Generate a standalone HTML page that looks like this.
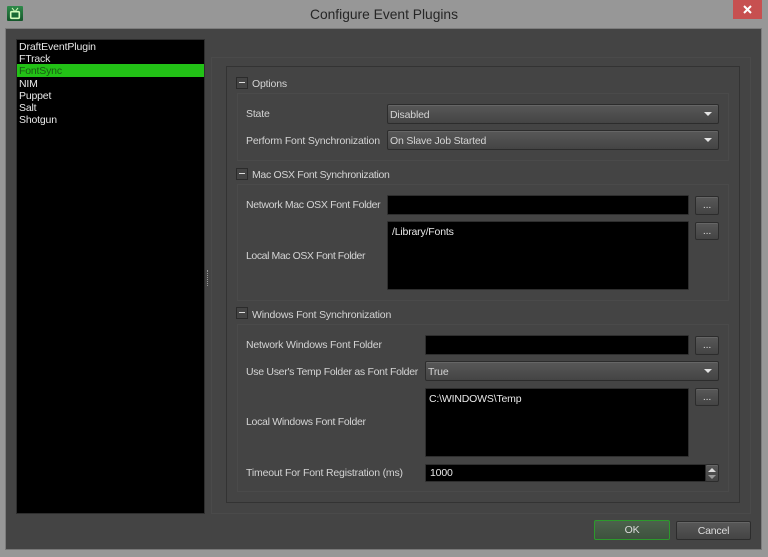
<!DOCTYPE html>
<html><head><meta charset="utf-8"><style>
html,body{margin:0;padding:0}
body{width:768px;height:557px;overflow:hidden;background:#979797;position:relative;font-family:"Liberation Sans",sans-serif;font-size:10.5px;letter-spacing:-.18px;color:#d4d4d4}
div{position:absolute;box-sizing:border-box}
.t{white-space:nowrap;line-height:13px;margin-top:1px}
.box{border:1px solid #4a4a4a}
.in{background:#000;border:1px solid #2e2e2e;border-radius:1px;color:#e8e8e8}
.cb{background:linear-gradient(#585858,#444);border:1px solid #2c2c2c;border-radius:2px;color:#d4d4d4;line-height:20px;padding-left:2px;box-shadow:inset 0 1px 0 #666}
.cb:after{content:"";position:absolute;right:6px;top:7px;border-left:4px solid transparent;border-right:4px solid transparent;border-top:4px solid #e4e4e4}
.btn{background:linear-gradient(#585858,#444);border:1px solid #2c2c2c;border-radius:2px;box-shadow:inset 0 1px 0 #666;text-align:center;color:#dcdcdc}
.m{width:12px;height:12px;border:1px solid #2b2b2b;background:#444}
.m:after{content:"";position:absolute;left:2px;top:4px;width:6px;height:1px;background:#ddd}
</style></head><body>
<div style="left:7px;top:6px;width:16px;height:15px;background:linear-gradient(#2f8a4a,#14562a);border-radius:1px"></div>
<svg style="position:absolute;left:7px;top:6px" width="16" height="15"><path d="M5 2l2.500 3M11 2L8.500 5" stroke="#c8f8b0" fill="none"/><rect x="3.700" y="5.700" width="8.600" height="6.600" rx="1" fill="#1a6a34" stroke="#d4fbbc" stroke-width="1.600"/></svg>
<div class="t" style="left:0;top:6px;width:768px;text-align:center;font-size:13.8px;letter-spacing:0;line-height:16px;color:#262626">Configure Event Plugins</div>
<div style="left:733px;top:0;width:29px;height:19px;background:#c75050"></div>
<svg style="position:absolute;left:733px;top:0" width="29" height="19"><path d="M11 6l7 7M18 6l-7 7" stroke="#fff" stroke-width="2"/></svg>

<div style="left:5px;top:28px;width:757px;height:522px;background:#444;border:1px solid #7c7c7c;border-bottom-color:#777"></div>

<div style="left:16px;top:39px;width:189px;height:475px;background:#000;border:1px solid #2e2e2e"></div>
<div style="left:17px;top:64px;width:187px;height:13px;background:#22c116"></div>
<div class="t" style="left:19px;top:40px;color:#e8e8e8;letter-spacing:-.12px">DraftEventPlugin</div>
<div class="t" style="left:19px;top:52px;color:#e8e8e8">FTrack</div>
<div class="t" style="left:19px;top:64px;color:#1a5a14">FontSync</div>
<div class="t" style="left:19px;top:77px;color:#e8e8e8">NIM</div>
<div class="t" style="left:19px;top:89px;color:#e8e8e8">Puppet</div>
<div class="t" style="left:19px;top:101px;color:#e8e8e8">Salt</div>
<div class="t" style="left:19px;top:113px;color:#e8e8e8">Shotgun</div>

<div style="left:207px;top:270px;width:2px;height:16px;border-left:1px dotted #999;"></div>

<div class="box" style="left:211px;top:57px;width:540px;height:457px"></div>
<div style="left:226px;top:66px;width:514px;height:437px;border:1px solid #333"></div>

<div class="m" style="left:236px;top:77px"></div>
<div class="t" style="left:252px;top:77px">Options</div>
<div class="box" style="left:237px;top:93px;width:492px;height:68px"></div>
<div class="t" style="left:246px;top:107px">State</div>
<div class="cb" style="left:387px;top:104px;width:332px;height:20px">Disabled</div>
<div class="t" style="left:246px;top:134px">Perform Font Synchronization</div>
<div class="cb" style="left:387px;top:130px;width:332px;height:20px">On Slave Job Started</div>

<div class="m" style="left:236px;top:168px"></div>
<div class="t" style="left:252px;top:168px;letter-spacing:-.32px">Mac OSX Font Synchronization</div>
<div class="box" style="left:237px;top:184px;width:492px;height:117px"></div>
<div class="t" style="left:246px;top:198px;letter-spacing:-.32px">Network Mac OSX Font Folder</div>
<div class="in" style="left:387px;top:195px;width:302px;height:20px"></div>
<div class="btn" style="left:695px;top:196px;width:24px;height:19px;line-height:17px">...</div>
<div class="t" style="left:246px;top:249px;letter-spacing:-.42px">Local Mac OSX Font Folder</div>
<div class="in" style="left:387px;top:221px;width:302px;height:69px;padding:4px 4px;line-height:13px">/Library/Fonts</div>
<div class="btn" style="left:695px;top:222px;width:24px;height:18px;line-height:16px">...</div>

<div class="m" style="left:236px;top:307px"></div>
<div class="t" style="left:252px;top:308px">Windows Font Synchronization</div>
<div class="box" style="left:237px;top:324px;width:492px;height:168px"></div>
<div class="t" style="left:246px;top:338px">Network Windows Font Folder</div>
<div class="in" style="left:425px;top:335px;width:264px;height:20px"></div>
<div class="btn" style="left:695px;top:336px;width:24px;height:19px;line-height:17px">...</div>
<div class="t" style="left:246px;top:365px;letter-spacing:-.29px">Use User's Temp Folder as Font Folder</div>
<div class="cb" style="left:425px;top:361px;width:294px;height:20px">True</div>
<div class="t" style="left:246px;top:415px;letter-spacing:-.3px">Local Windows Font Folder</div>
<div class="in" style="left:425px;top:388px;width:264px;height:69px;padding:4px 3px;line-height:13px">C:\WINDOWS\Temp</div>
<div class="btn" style="left:695px;top:388px;width:24px;height:18px;line-height:16px">...</div>
<div class="t" style="left:246px;top:466px">Timeout For Font Registration (ms)</div>
<div class="in" style="left:425px;top:464px;width:281px;height:18px;padding-left:4px;line-height:17px">1000</div>
<div class="btn" style="left:705px;top:464px;width:14px;height:18px"></div>
<svg style="position:absolute;left:705px;top:464px" width="14" height="18"><path d="M3 8l4-4 4 4z" fill="#ddd"/><path d="M3 11l4 4 4-4z" fill="#999"/></svg>

<div class="btn" style="left:594px;top:520px;width:76px;height:20px;line-height:19px;border:1px solid #2c9a2c;background:linear-gradient(#4c624c,#3e523e);box-shadow:none">OK</div>
<div class="btn" style="left:676px;top:521px;width:75px;height:19px;line-height:18px">Cancel</div>
</body></html>
